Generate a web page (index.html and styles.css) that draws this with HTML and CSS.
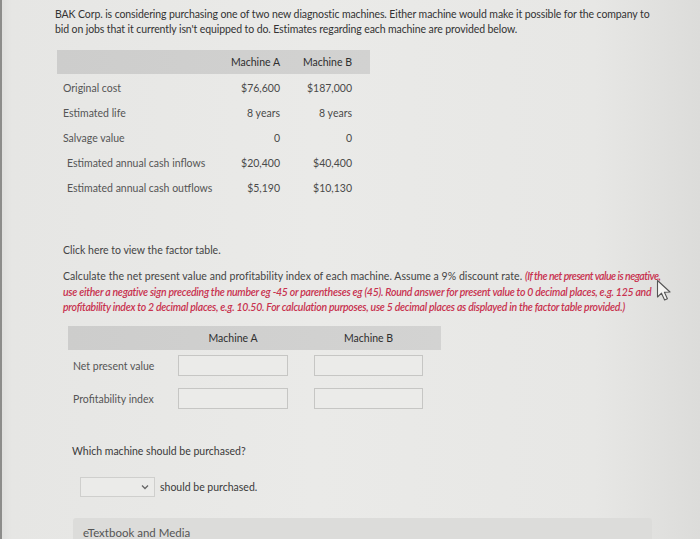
FILE: index.html
```html
<!DOCTYPE html>
<html>
<head>
<meta charset="utf-8">
<link rel="stylesheet" href="styles.css">
</head>
<body>
<div class="screen">
  <div class="content">
    <p class="intro">BAK Corp. is considering purchasing one of two new diagnostic machines. Either machine would make it possible for the company to<br>bid on jobs that it currently isn't equipped to do. Estimates regarding each machine are provided below.</p>

    <div class="facts">
      <div class="frow fhead"><span></span><span class="num">Machine A</span><span class="num">Machine B</span></div>
      <div class="frow first"><span class="lbl">Original cost</span><span class="num">$76,600</span><span class="num">$187,000</span></div>
      <div class="frow"><span class="lbl">Estimated life</span><span class="num">8 years</span><span class="num">8 years</span></div>
      <div class="frow"><span class="lbl">Salvage value</span><span class="num">0</span><span class="num">0</span></div>
      <div class="frow"><span class="lbl shift">Estimated annual cash inflows</span><span class="num">$20,400</span><span class="num">$40,400</span></div>
      <div class="frow"><span class="lbl shift">Estimated annual cash outflows</span><span class="num">$5,190</span><span class="num">$10,130</span></div>
    </div>

    <p class="link">Click here to view the factor table.</p>

    <p class="task">Calculate the net present value and profitability index of each machine. Assume a 9% discount rate. <em class="note"><span class="tight">(If the net present value is negative,</span><br>use either a negative sign preceding the number eg -45 or parentheses eg (45). Round answer for present value to 0 decimal places, e.g. 125 and<br>profitability index to 2 decimal places, e.g. 10.50. For calculation purposes, use 5 decimal places as displayed in the factor table provided.)</em></p>

    <div class="answers">
      <div class="arow ahead"><span></span><span class="col">Machine A</span><span></span><span class="col">Machine B</span></div>
      <div class="arow"><span class="albl">Net present value</span><span class="box"></span><span></span><span class="box"></span></div>
      <div class="arow"><span class="albl">Profitability index</span><span class="box"></span><span></span><span class="box"></span></div>
    </div>

    <p class="which">Which machine should be purchased?</p>

    <div class="choice">
      <span class="select">
        <svg class="chev" width="8" height="6" viewBox="0 0 8 6"><path d="M1 1.5 L4 4.5 L7 1.5" fill="none" stroke="#666" stroke-width="1.3"/></svg>
      </span>
      <span class="after">should be purchased.</span>
    </div>

    <div class="media"><span>eTextbook and Media</span></div>
  </div>

  <svg class="cursor" width="20" height="24" viewBox="0 0 20 24">
    <path d="M1.5 1.5 L1.5 18 L5.5 14.2 L8.6 21 L11.4 19.8 L8.4 13.2 L14 13 Z" fill="#f4f4f2" stroke="#555" stroke-width="1.1" stroke-linejoin="round"/>
  </svg>
</div>
</body>
</html>
```

FILE: styles.css
```css
html, body {
  margin: 0;
  padding: 0;
}

body {
  background: #e8e8e6;
  font-family: Lato, "Open Sans", sans-serif;
  font-size: 10.5px;
  color: #3c3c3c;
}

.screen {
  position: relative;
  width: 700px;
  height: 539px;
  overflow: hidden;
  background: linear-gradient(90deg, #8c8c8a 0, #8c8c8a 2px, #dfdfdd 2px, #e6e6e4 12px, #eaeae8 45%, #e7e7e5 85%, #dcdcda 100%);
}

.content {
  padding: 7px 0 0 55px;
}

p {
  margin: 0;
}

.intro {
  line-height: 15px;
  color: #333;
  letter-spacing: -0.1px;
}

/* facts table */
.facts {
  margin: 13px 0 0 2px;
  width: 313px;
}

.frow {
  display: grid;
  grid-template-columns: 160px 63px 72px 18px;
  height: 25px;
  align-items: center;
  color: #4a4a4a;
}

.frow.first {
  margin-top: 1px;
}

.fhead {
  height: 24px;
  background: linear-gradient(90deg, #cdcdcc, #d2d2d1);
  color: #2e2e2e;
}

.lbl {
  padding-left: 6px;
  color: #555;
}

.lbl.shift {
  padding-left: 10px;
}

.num {
  text-align: right;
}

.link {
  margin: 43px 0 0 8px;
  line-height: 15px;
  color: #444;
}

.task {
  margin: 11px 0 0 8px;
  line-height: 15.5px;
  color: #444;
  white-space: nowrap;
  letter-spacing: 0.05px;
}

.note {
  color: #c8324f;
  font-style: italic;
  font-weight: 600;
  letter-spacing: -0.27px;
}

.tight {
  letter-spacing: -0.5px;
}

/* answer table */
.answers {
  margin: 10px 0 0 13px;
  width: 373px;
}

.arow {
  display: grid;
  grid-template-columns: 110px 110px 26px 109px 18px;
  align-items: center;
  margin-top: 5px;
}

.arow + .arow + .arow {
  margin-top: 12px;
}

.ahead {
  margin-top: 0;
  height: 24px;
  background: linear-gradient(90deg, #cdcdcc, #d3d3d2);
  color: #2e2e2e;
}

.col {
  text-align: center;
}

.albl {
  padding-left: 5px;
  color: #555;
  position: relative;
  top: 1px;
}

.box {
  height: 19px;
  border: 1px solid #c6c6c4;
  background: #ebebe9;
}

.which {
  margin: 35px 0 0 17px;
  line-height: 15px;
  color: #3a3a3a;
}

.choice {
  display: flex;
  align-items: center;
  gap: 5px;
  margin: 18px 0 0 25px;
}

.select {
  display: flex;
  align-items: center;
  justify-content: flex-end;
  box-sizing: border-box;
  width: 75px;
  height: 20px;
  padding-right: 5px;
  border: 1px solid #cfcfcd;
  background: #ebebe9;
}

.after {
  color: #3a3a3a;
}

.media {
  margin: 21px 0 0 18px;
  width: 579px;
  height: 30px;
  background: #dcdcda;
  border-radius: 3px 3px 0 0;
  padding: 8px 0 0 10px;
  box-sizing: border-box;
  font-size: 11.5px;
  color: #555;
}

.cursor {
  position: absolute;
  left: 656px;
  top: 279px;
}
```
